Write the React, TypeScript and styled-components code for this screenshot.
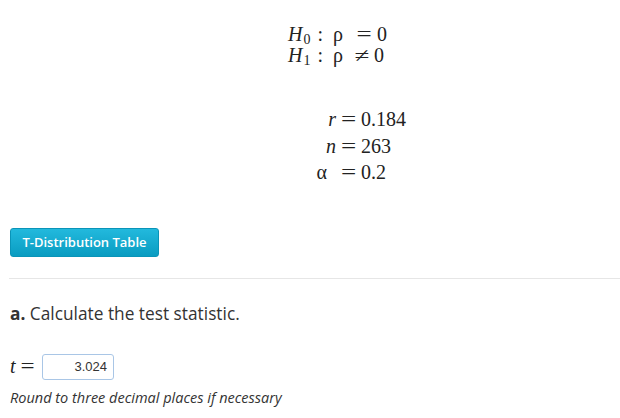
import React from "react";
import styled, { createGlobalStyle } from "styled-components";

const Global = createGlobalStyle`
  html, body { margin: 0; padding: 0; background: #fff; }
  body { font-family: "Open Sans", "Liberation Sans", sans-serif; color: #333; }
`;

const Page = styled.div`
  width: 620px;
  height: 418px;
  overflow: hidden;
  box-sizing: border-box;
  padding: 0 0 0 10px;
  display: flex;
  flex-direction: column;
`;

const MathBlock = styled.div`
  font-family: "Liberation Serif", "Times New Roman", serif;
  font-size: 20px;
  color: #222;
  display: flex;
  flex-direction: column;
  align-items: flex-start;
  padding-top: 24px;
`;

const Hyp = styled.div`
  margin-left: 278px;
  height: 21px;
  line-height: 21px;
  display: flex;
  align-items: baseline;
  white-space: pre;
`;

const Sub = styled.span`
  font-size: 14px;
  position: relative;
  top: 3px;
  margin-left: 1px;
`;

const Var = styled.span`
  font-style: italic;
`;

const Op = styled.span<{ $l: number; $r: number }>`
  display: inline-block;
  width: 14px;
  text-align: center;
  margin-left: ${(p) => p.$l}px;
  margin-right: ${(p) => p.$r}px;
  transform: scaleX(1.35);
`;

const Colon = styled.span`
  margin-left: 7px;
  margin-right: 10px;
`;

const Given = styled.div`
  margin-top: 40px;
  margin-left: -10px;
  display: grid;
  grid-template-columns: 336px auto auto;
  line-height: 26.5px;
  white-space: pre;
`;

const Lhs = styled.div<{ $pad?: number }>`
  text-align: right;
  padding-right: ${(p) => p.$pad ?? 0}px;
`;

const Eq = styled.div`
  width: 15px;
  text-align: center;
  margin: 0 5px 0 5px;
  transform: scaleX(1.35);
`;

const Rhs = styled.div``;

const Button = styled.button`
  margin-top: 42px;
  align-self: flex-start;
  width: 149px;
  height: 29px;
  border: 1px solid #0a94b8;
  border-radius: 3px;
  background: linear-gradient(#22b9dd, #0a9cc1);
  color: #fff;
  font-family: "Open Sans", sans-serif;
  font-size: 13px;
  font-weight: 600;
  padding: 0;
  cursor: pointer;
`;

const Divider = styled.hr`
  margin: 21px 0 0 -1px;
  border: 0;
  border-top: 1px solid #e6e6e6;
  height: 0;
`;

const Question = styled.div`
  margin-top: 23px;
  font-size: 17.3px;
  line-height: 23px;
  color: #333;
  b { font-weight: 700; }
`;

const AnswerRow = styled.div`
  margin-top: 29px;
  display: flex;
  align-items: center;
`;

const Label = styled.span`
  display: flex;
  align-items: baseline;
  font-family: "Liberation Serif", "Times New Roman", serif;
  font-size: 20px;
  width: 32px;
  color: #222;
`;

const LabelEq = styled.span`
  display: inline-block;
  margin-left: 6px;
  transform: scaleX(1.25);
`;

const Input = styled.div`
  width: 64px;
  height: 24px;
  border: 1px solid #a9c6e6;
  border-radius: 3px;
  box-sizing: content-box;
  display: flex;
  align-items: center;
  justify-content: flex-end;
  padding-right: 6px;
  font-family: "Liberation Sans", Arial, sans-serif;
  font-size: 13px;
  color: #333;
`;

const Hint = styled.div`
  margin-top: 8px;
  font-style: italic;
  font-size: 14.5px;
  line-height: 20px;
  color: #333;
`;

export default function App() {
  return (
    <>
      <Global />
      <Page>
        <MathBlock>
          <Hyp>
            <Var>H</Var><Sub>0</Sub><Colon>:</Colon>ρ<Op $l={14} $r={6}>=</Op>0
          </Hyp>
          <Hyp>
            <Var>H</Var><Sub>1</Sub><Colon>:</Colon>ρ<Op $l={12} $r={5}>≠</Op>0
          </Hyp>
          <Given>
            <Lhs><Var>r</Var></Lhs><Eq>=</Eq><Rhs>0.184</Rhs>
            <Lhs><Var>n</Var></Lhs><Eq>=</Eq><Rhs>263</Rhs>
            <Lhs $pad={9}>α</Lhs><Eq>=</Eq><Rhs>0.2</Rhs>
          </Given>
        </MathBlock>
        <Button>T-Distribution Table</Button>
        <Divider />
        <Question><b>a.</b> Calculate the test statistic.</Question>
        <AnswerRow>
          <Label><Var>t</Var><LabelEq>=</LabelEq></Label>
          <Input>3.024</Input>
        </AnswerRow>
        <Hint>Round to three decimal places if necessary</Hint>
      </Page>
    </>
  );
}
